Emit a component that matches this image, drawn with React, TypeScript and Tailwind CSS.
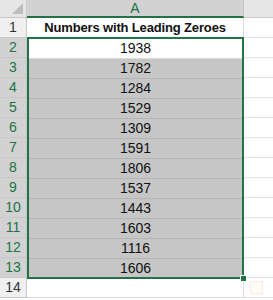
import React from "react";

const values = ["1938", "1782", "1284", "1529", "1309", "1591", "1806", "1537", "1443", "1603", "1116", "1606"];

const font = { fontFamily: '"Liberation Sans", Arial, sans-serif' };

function RowHeader({ n, selected }: { n: number; selected: boolean }) {
  return (
    <div
      className={
        "flex h-[20px] items-center justify-center border-b border-r border-[#c8c8c8] text-[14px] " +
        (selected ? "bg-[#d2d2d2] text-[#217346]" : "bg-[#f0f0f0] text-[#333]")
      }
    >
      {n}
    </div>
  );
}

export default function App() {
  return (
    <div className="flex h-[300px] w-[273px] overflow-hidden bg-white" style={font}>
      {/* row headers */}
      <div className="flex w-[27px] flex-col">
        <div className="flex h-[18px] items-end justify-end border-b border-r border-[#c8c8c8] bg-[#e6e6e6] p-[3px]">
          <div className="h-0 w-0 border-b-[11px] border-l-[11px] border-b-[#bdbdbd] border-l-transparent" />
        </div>
        {Array.from({ length: 14 }, (_, i) => (
          <RowHeader key={i} n={i + 1} selected={i >= 1 && i <= 12} />
        ))}
      </div>

      {/* column A */}
      <div className="flex w-[217px] flex-col">
        <div className="flex h-[18px] items-center justify-center border-b-2 border-r border-b-[#217346] border-r-[#c8c8c8] bg-[#d2d2d2] text-[14px] text-[#217346]">
          A
        </div>
        <div className="flex h-[19px] items-center justify-center border-r border-[#dadada] text-[13px] font-bold tracking-[-0.15px] text-[#111]">
          Numbers with Leading Zeroes
        </div>

        {/* selected range A2:A13 */}
        <div className="relative flex flex-col border-2 border-[#217346]">
          {values.map((v, i) => (
            <div
              key={v + i}
              className={
                "flex items-center justify-center text-[14px] text-[#111] " +
                (i === 0 ? "bg-white " : "bg-[#c6c6c6] ") +
                (i === values.length - 1 ? "h-[18px]" : "h-[20px] border-b " + (i === 0 ? "border-[#dadada]" : "border-[#b4b4b4]"))
              }
            >
              {v}
            </div>
          ))}
          {/* fill handle */}
          <div className="absolute -bottom-[5px] -right-[5px] h-[7px] w-[7px] border border-white bg-[#217346]" />
        </div>

        <div className="h-[19px] border-b border-r border-[#dadada]" />
      </div>

      {/* column B */}
      <div className="flex flex-1 flex-col">
        <div className="h-[18px] border-b border-[#c8c8c8] bg-[#e6e6e6]" />
        {Array.from({ length: 13 }, (_, i) => (
          <div key={i} className="h-[20px] border-b border-[#e1e1e1]" />
        ))}
        <div className="flex h-[20px] items-center border-b border-[#e1e1e1] pl-[6px]">
          <div className="h-[13px] w-[13px] rounded-[1px] border border-[#f1ede4] bg-[#fdfcf9]" />
        </div>
      </div>
    </div>
  );
}
